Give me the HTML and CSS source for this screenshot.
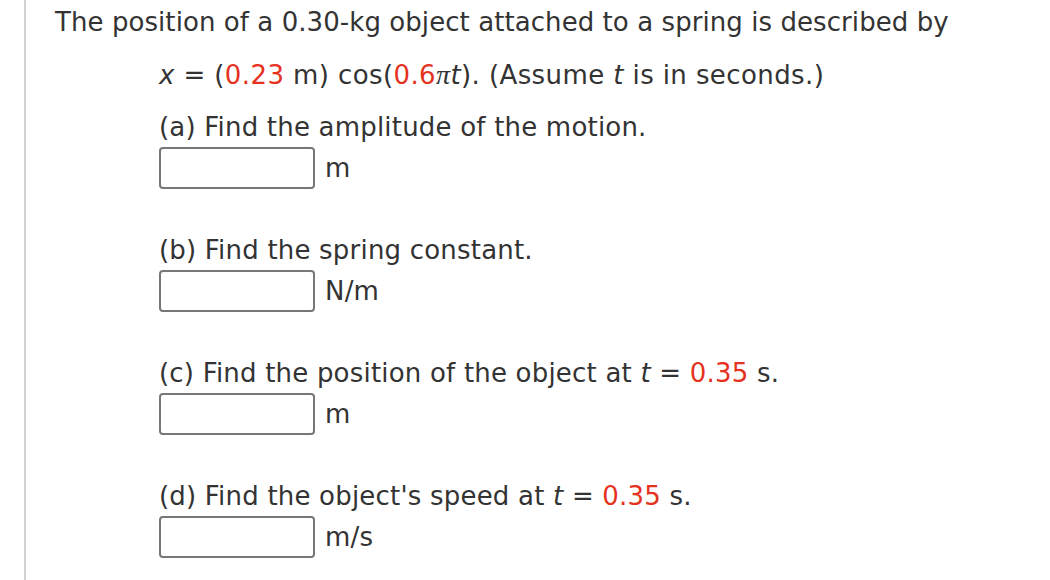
FILE: index.html
```html
<!DOCTYPE html>
<html>
<head>
<meta charset="utf-8">
<link rel="stylesheet" href="styles.css">
</head>
<body>
<div class="page">
  <div class="question">
    <p class="intro">The position of a 0.30-kg object attached to a spring is described by</p>
    <div class="indent">
      <p class="eq"><i>x</i> = (<span class="red">0.23</span> m) cos(<span class="red">0.6</span><i class="pi">π</i><i>t</i>). (Assume <i>t</i> is in seconds.)</p>
      <div class="part">
        <p class="prompt">(a) Find the amplitude of the motion.</p>
        <div class="answer"><span class="box"></span><span class="unit">m</span></div>
      </div>
      <div class="part">
        <p class="prompt">(b) Find the spring constant.</p>
        <div class="answer"><span class="box"></span><span class="unit">N/m</span></div>
      </div>
      <div class="part">
        <p class="prompt">(c) Find the position of the object at <i>t</i> = <span class="red">0.35</span> s.</p>
        <div class="answer"><span class="box"></span><span class="unit">m</span></div>
      </div>
      <div class="part">
        <p class="prompt">(d) Find the object's speed at <i>t</i> = <span class="red">0.35</span> s.</p>
        <div class="answer"><span class="box"></span><span class="unit">m/s</span></div>
      </div>
    </div>
  </div>
</div>
</body>
</html>
```
FILE: styles.css
```css
html, body {
  margin: 0;
  padding: 0;
  background: #fff;
}
.page {
  width: 1050px;
  height: 580px;
  box-sizing: border-box;
  padding-left: 24px;
  overflow: hidden;
}
.question {
  height: 580px;
  border-left: 2px solid #d2d2d2;
  padding-left: 29px;
  font-family: "DejaVu Sans", Verdana, sans-serif;
  font-size: 26px;
  color: #333;
}
p {
  margin: 0;
}
.intro {
  line-height: 44px;
  letter-spacing: 0.07px;
}
.indent {
  padding-left: 104px;
}
.eq {
  margin-top: 11px;
  line-height: 40px;
  letter-spacing: 0.4px;
}
.pi {
  font-family: "Liberation Serif", serif;
  font-size: 28px;
}
.red {
  color: #e4321e;
}
.part {
  margin-top: 13px;
}
.part + .part {
  margin-top: 42px;
}
.prompt {
  line-height: 39px;
  letter-spacing: 0.2px;
}
.answer {
  display: flex;
  align-items: center;
  gap: 10px;
}
.box {
  display: block;
  width: 152px;
  height: 38px;
  border: 2px solid #777;
  border-radius: 4px;
}
.unit {
  line-height: 42px;
  letter-spacing: 0.2px;
}
```
